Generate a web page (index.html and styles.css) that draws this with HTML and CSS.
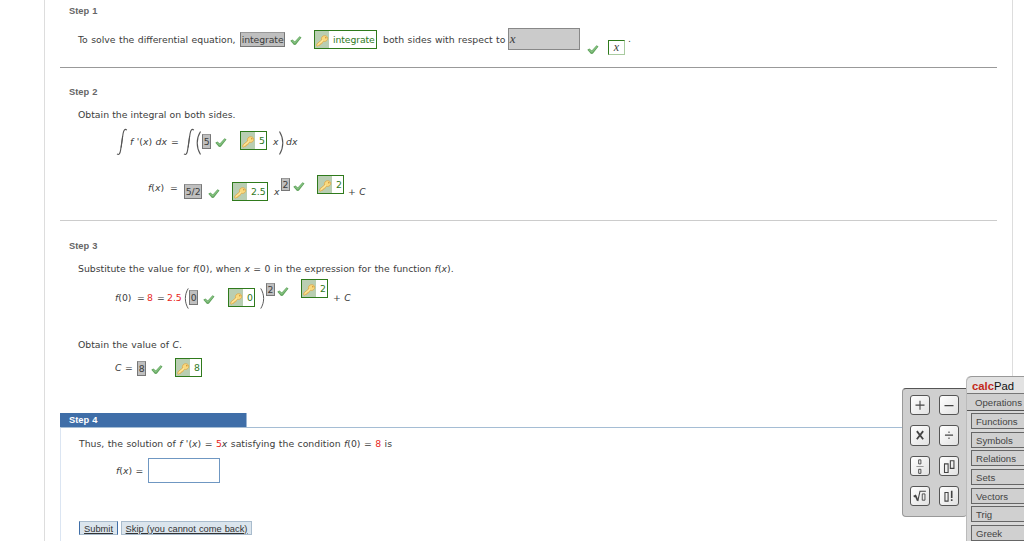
FILE: index.html
```
<!DOCTYPE html>
<html lang="en">
<head>
    <meta charset="UTF-8">
    <title>Differential equation tutorial</title>
    <link rel="stylesheet" href="styles.css">
</head>
<body>
<!-- shared shapes -->
<svg class="defs">
    <symbol id="check" viewBox="0 0 12 11">
        <path d="M.3 5.800 2.400 4.400 4.800 6.400 9.600 1.300 11.500 2.400 5.800 9.800 4 9.900Z" fill="#62a45e"/>
        <path d="M2 5.800 4.800 8 10 2.400" fill="none" stroke="#86c282" stroke-width="1.200"/>
    </symbol>
    <symbol id="key" viewBox="0 0 15 17">
        <path d="M1.800 15.200 2 13.200 7 9C6.300 6.400 8 4.400 10.300 4.400 12.700 4.400 14.200 6.300 13.500 8.300 12.800 10.200 10.800 10.900 9.200 10.500L8 11.800 7.300 13 5.900 13.200 5.400 14.500 3.900 14.800 3 15.700Z" fill="#f9d97e" stroke="#dca648" stroke-width=".8"/>
        <circle cx="11.600" cy="6.500" r=".8" fill="#c58c30"/>
        <path d="M3 14 8.500 9.300" stroke="#fdeeb0" stroke-width=".8"/>
    </symbol>
    <symbol id="int" viewBox="0 0 12 28">
        <path d="M10.8 2.2C9 .4 7.7 2 7.1 5.5L4.6 22.2C4.1 25.7 2.9 27.4 1 25.9" fill="none" stroke="#555" stroke-width="1.1"/>
        <path d="M6.6 8 5.2 19.5" stroke="#555" stroke-width="1"/>
    </symbol>
    <symbol id="paren" viewBox="0 0 5 24">
        <path d="M4.5.5C.1 7.5.1 16.5 4.5 23.5" fill="none" stroke="#555" stroke-width="1.1"/>
    </symbol>
</svg>

<div class="sheet">
    <div class="main">
        <h3 class="label">Step 1</h3>
        <div class="row r1">
            <span class="t">To solve the differential equation,</span>
            <span class="ans">integrate</span>
            <svg class="check"><use href="#check"/></svg>
            <span class="keybox"><svg><use href="#key"/></svg><b>integrate</b></span>
            <span class="t">both sides with respect to</span>
            <span class="ans wide">x</span>
            <svg class="check"><use href="#check"/></svg>
            <span class="xbox">x</span>
            <span class="t">.</span>
        </div>
        <hr class="dark">

        <h3 class="label l2">Step 2</h3>
        <p class="short">Obtain the integral on both sides.</p>
        <div class="row r2">
            <svg class="int"><use href="#int"/></svg>
            <span class="t"><i>f '</i>(<i>x</i>) <i>dx</i></span>
            <span class="t">=</span>
            <svg class="int"><use href="#int"/></svg>
            <svg class="paren"><use href="#paren"/></svg>
            <span class="ans">5</span>
            <svg class="check"><use href="#check"/></svg>
            <span class="keybox"><svg><use href="#key"/></svg><b>5</b></span>
            <i class="t">x</i>
            <svg class="paren close"><use href="#paren"/></svg>
            <i class="t">dx</i>
        </div>
        <div class="row r3">
            <span class="t"><i>f</i>(<i>x</i>)</span>
            <span class="t">=</span>
            <span class="ans">5/2</span>
            <svg class="check"><use href="#check"/></svg>
            <span class="keybox"><svg><use href="#key"/></svg><b>2.5</b></span>
            <i class="t">x</i>
            <span class="ans sup">2</span>
            <svg class="check"><use href="#check"/></svg>
            <span class="keybox"><svg><use href="#key"/></svg><b>2</b></span>
            <span class="t">+ <i>C</i></span>
        </div>
        <hr>

        <h3 class="label l3">Step 3</h3>
        <p>Substitute the value for <i>f</i>(0), when <i>x</i> = 0 in the expression for the function <i>f</i>(<i>x</i>).</p>
        <div class="row r4">
            <span class="t"><i>f</i>(0)</span>
            <span class="t">=</span>
            <span class="t red">8</span>
            <span class="t">=</span>
            <span class="t red">2.5</span>
            <svg class="paren"><use href="#paren"/></svg>
            <span class="ans">0</span>
            <svg class="check"><use href="#check"/></svg>
            <span class="keybox"><svg><use href="#key"/></svg><b>0</b></span>
            <svg class="paren close"><use href="#paren"/></svg>
            <span class="ans sup">2</span>
            <svg class="check"><use href="#check"/></svg>
            <span class="keybox"><svg><use href="#key"/></svg><b>2</b></span>
            <span class="t">+ <i>C</i></span>
        </div>
        <p class="value">Obtain the value of <i>C</i>.</p>
        <div class="row r5">
            <span class="t"><i>C</i> =</span>
            <span class="ans">8</span>
            <svg class="check"><use href="#check"/></svg>
            <span class="keybox"><svg><use href="#key"/></svg><b>8</b></span>
        </div>

        <h3 class="current">Step 4</h3>
        <div class="panel">
            <p>Thus, the solution of <i>f '</i>(<i>x</i>) = <span class="red">5</span><i>x</i> satisfying the condition <i>f</i>(0) = <span class="red">8</span> is</p>
            <div class="row r6">
                <span class="t"><i>f</i>(<i>x</i>) =</span>
                <input class="field" type="text">
            </div>
            <div class="buttons">
                <a class="submit">Submit</a>
                <a class="skip">Skip (you cannot come back)</a>
            </div>
        </div>
    </div>
</div>

<div class="calcpad">
    <div class="keys">
        <svg viewBox="0 0 20 20"><path d="M5 10h10M10 5v10"/></svg>
        <svg viewBox="0 0 20 20"><path d="M5 10.5h10"/></svg>
        <svg viewBox="0 0 20 20"><path d="M6.5 5.500 13.500 14.5M13.500 5.500 6.5 14.5" stroke-width="2"/></svg>
        <svg viewBox="0 0 20 20"><path d="M5.5 10h9M10 6v1.6M10 12.6v1.6"/></svg>
        <svg viewBox="0 0 20 20"><path d="M6 10.3h8" stroke="#999"/><path d="M8.5 3h2.5v4.5h-2.5zM8.5 13.500h2.5v4.500h-2.5z" stroke-width="1"/></svg>
        <svg viewBox="0 0 20 20"><path d="M5 7.5h4v9.500h-4zM11.5 4h4v8.500h-4z"/></svg>
        <svg viewBox="0 0 20 20"><path d="M3 10.5 5 9.5 7.5 15" stroke-width="2"/><path d="M7.5 15.5 10 4.5h6.5"/><path d="M12.5 7.5h3v7h-3z" stroke-width="1"/></svg>
        <svg viewBox="0 0 20 20"><path d="M5.5 6h3.5v9.500h-3.500z"/><path d="M13 4v8M13 13.500v2" stroke-width="1.800"/></svg>
    </div>
    <div class="tabs">
        <div class="title"><b>calc</b>Pad</div>
        <div class="open">Operations</div>
        <ul>
            <li>Functions</li>
            <li>Symbols</li>
            <li>Relations</li>
            <li>Sets</li>
            <li>Vectors</li>
            <li>Trig</li>
            <li>Greek</li>
        </ul>
    </div>
</div>
</body>
</html>
```
FILE: styles.css
```
*{
    margin: 0;
    padding: 0;
    box-sizing: border-box;
    list-style-type: none;
}
body{
    height: 541px;
    overflow: hidden;
    position: relative;
    background: #fff;
    color: #3c3c3c;
    font: 9.3px/12px "DejaVu Sans", Verdana, sans-serif;
    word-spacing: .5px;
    white-space: nowrap;
}
.defs{
    display: none;
}
.sheet{
    width: 969px;
    height: 541px;
    margin-left: 44px;
    padding: 5px 14px 0 15px;
    border-left: 1px solid #ddd;
    border-right: 1px solid #ddd;
}
.label{
    margin-left: 9px;
    font: bold 9.3px/12px "Liberation Sans", Arial, sans-serif;
    color: #666;
}
.l2{
    margin-top: 18px;
}
.l3{
    margin-top: 19px;
}
hr{
    width: 937px;
    height: 1px;
    border: 0;
    background: #ccc;
}
hr.dark{
    background: #999;
}
p{
    margin: 11px 0 0 18px;
}
.short{
    word-spacing: .2px;
}
.value{
    margin-top: 28px;
}
.red{
    color: #e8281e;
}

/* formula rows: one column per piece */
.row{
    display: grid;
    align-items: start;
}
.r1{
    height: 45px;
    margin: 5px 0 0 18px;
    grid-template-columns: 162px 50px 24px 69px 125px 79px 21px 20px 10px;
}
.r2{
    height: 30px;
    margin: 7px 0 0 56px;
    grid-template-columns: 14px 41px 12px 13px 6px 13px 25px 33px 6px 7px 20px;
}
.r3{
    height: 45px;
    margin: 17px 0 0 88px;
    grid-template-columns: 22px 14px 24px 24px 42px 7px 12px 24px 31px 30px;
}
.r4{
    height: 32px;
    margin: 4px 0 0 55px;
    grid-template-columns: 22px 10px 10px 10px 17px 5px 14px 25px 32px 6px 11px 24px 32px 30px;
}
.r5{
    height: 20px;
    margin: 7px 0 0 55px;
    grid-template-columns: 22px 14px 24px 30px;
}
.r6{
    height: 26px;
    margin: 8px 0 0 55px;
    grid-template-columns: 32px 72px;
}
.r1 .t{ margin-top: 12px; }
.r1 .ans{ margin-top: 10px; }
.r1 .check{ margin-top: 13px; }
.r1 .keybox{ margin-top: 8px; }
.r1 .wide{ margin-top: 6px; }
.r1 .wide + .check{ margin-top: 22px; }
.r2 .t{ margin-top: 8px; }
.r2 .ans{ margin-top: 6px; }
.r2 .check{ margin-top: 9px; }
.r2 .keybox{ margin-top: 3px; }
.r2 .paren{ margin-top: 3px; }
.r3 .t{ margin-top: 7px; }
.r3 i.t, .r3 .t:last-child{ margin-top: 11px; }
.r3 .ans{ margin-top: 9px; }
.r3 .check{ margin-top: 13px; }
.r3 .keybox{ margin-top: 7px; }
.r3 .sup{ margin-top: 3px; }
.r3 .sup + .check{ margin-top: 6px; }
.r3 .sup ~ .keybox{ margin-top: 0; }
.r4 .t{ margin-top: 13px; }
.r4 .ans{ margin-top: 11px; }
.r4 .check{ margin-top: 15px; }
.r4 .keybox{ margin-top: 9px; }
.r4 .paren{ height: 21px; margin-top: 9px; }
.r4 .sup{ margin-top: 4px; }
.r4 .sup + .check{ margin-top: 7px; }
.r4 .sup ~ .keybox{ margin-top: 0; }
.r5 .t{ margin-top: 4px; }
.r5 .ans{ margin-top: 3px; }
.r5 .check{ margin-top: 6px; }
.r6 .t{ margin-top: 7px; }
.r1 .t:last-child{ margin-top: 11px; }

.ans{
    justify-self: start;
    height: 15px;
    padding: 0 .8px;
    letter-spacing: -.1px;
    line-height: 14px;
    background: #bfbfbf;
    border: 1px solid #777;
    border-top-color: #999;
}
.sup{
    height: 13px;
    padding: 0 .5px;
    line-height: 12px;
}
.wide{
    width: 72px;
    height: 22px;
    background: #cbcbcb;
    border-color: #888;
    font: italic 13px/20px "Liberation Serif", "Times New Roman", serif;
}
.xbox{
    width: 17px;
    height: 15px;
    margin-top: 18px;
    border: 1px solid #2f7a1c;
    border-right-color: #a9cba0;
    border-bottom-color: #a9cba0;
    font: italic 12px/12px "Liberation Serif", "Times New Roman", serif;
    text-align: center;
}
.check{
    width: 12px;
    height: 11px;
}
.int{
    width: 12px;
    height: 28px;
}
.paren{
    width: 5px;
    height: 24px;
}
.close{
    transform: scaleX(-1);
}
.keybox{
    display: flex;
    justify-self: start;
    height: 19px;
    border: 1px solid #2f7a1c;
    color: #2f7a1c;
    background: #fff;
}
.keybox svg{
    width: 14px;
    height: 17px;
    background: #b9ceb2;
}
.keybox b{
    padding: 0 1px 0 4px;
    font-weight: normal;
    letter-spacing: -.1px;
    line-height: 18px;
}

/* current step */
.current{
    width: 187px;
    height: 14px;
    margin-top: 35px;
    padding-left: 9px;
    background: #3f6ea8;
    border-right: 1px solid #9bb5d3;
    color: #fff;
    font: bold 9.3px/14px "Liberation Sans", Arial, sans-serif;
}
.panel{
    height: 130px;
    border-top: 1px solid #a5bdd4;
    border-left: 1px solid #dbe5f2;
}
.panel p{
    margin-top: 10px;
}
.field{
    width: 72px;
    height: 25px;
    border: 1px solid #6f97c2;
    background: #fff;
}
.buttons{
    display: flex;
    gap: 3px;
    margin: 37px 0 0 18px;
}
.buttons a{
    height: 14px;
    border: 1px solid #a9bccd;
    background: #dbe5ed;
    color: #333;
    font: 9.3px/14px "Liberation Sans", Arial, sans-serif;
    text-align: center;
    text-decoration: underline;
}
.buttons .submit{
    width: 39px;
    border-left-color: #3f6ea8;
    border-right-color: #3f6ea8;
}
.buttons .skip{
    width: 131px;
}

/* calcPad floats over the sheet */
.calcpad{
    position: absolute;
    left: 902px;
    top: 376px;
    display: flex;
    align-items: flex-start;
    width: 122px;
    height: 165px;
    overflow: hidden;
    font: 9.6px/15px "Liberation Sans", Arial, sans-serif;
}
.keys{
    display: grid;
    grid-template-columns: 20px 20px;
    gap: 10px 9px;
    width: 65px;
    height: 129px;
    margin-top: 12px;
    padding: 6px 0 0 7px;
    align-content: start;
    background: #cfcfcf;
    border: 1px solid #999;
    border-top-color: #555;
    border-right: 0;
    border-radius: 4px 0 4px 4px;
}
.keys svg{
    width: 20px;
    height: 20.300px;
    background: linear-gradient(135deg, #fff, #e2e2e2);
    border: 1px solid #555;
    border-radius: 3px;
    fill: none;
    stroke: #444;
    stroke-width: 1.200;
}
.tabs{
    width: 59px;
    height: 165px;
    margin-left: -1px;
    background: #d8d8d8;
    border-left: 1px solid #bbb;
    border-radius: 5px 0 0 0;
}
.title{
    height: 18px;
    padding-left: 5px;
    border-top: 1px solid #999;
    border-bottom: 1px solid #777;
    border-radius: 5px 0 0 0;
    background: #e2e2e2;
    color: #111;
    font-size: 11.300px;
    line-height: 19px;
}
.title b{
    color: #c22a1c;
}
.open{
    height: 17px;
    padding-left: 8px;
    line-height: 18px;
    background: #cfcfcf;
    border-bottom: 1px solid #555;
    color: #444;
}
.tabs ul{
    display: grid;
    gap: 2.660px;
    padding: 2px 0 0 4px;
}
.tabs li{
    height: 16px;
    padding-left: 4px;
    background: #d0d0d0;
    border: 1px solid #666;
    border-right: 0;
    color: #444;
}
.keys{
    width: 66px;
}
```
